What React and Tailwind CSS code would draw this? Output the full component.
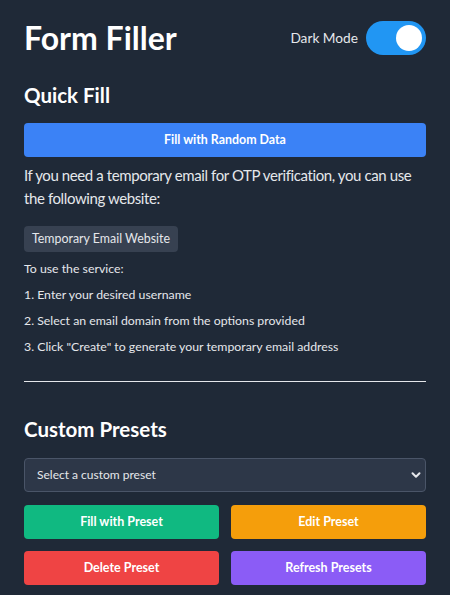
import React, { useState } from "react";

const App = () => {
  const [dark, setDark] = useState(true);

  return (
    <div
      className="min-h-screen bg-[#1f2937] text-[#e5e7eb] px-6 pt-5 pb-4"
      style={{ fontFamily: 'Lato, "Liberation Sans", sans-serif' }}
    >
      <div className="flex items-center justify-between h-[36px]">
        <h1 className="text-[32px] font-bold text-white leading-none">Form Filler</h1>
        <div className="flex items-center gap-2">
          <span className="text-[13.7px] text-[#e5e7eb]">Dark Mode</span>
          <button
            onClick={() => setDark(!dark)}
            className="w-[60px] h-[34px] rounded-full bg-[#2196f3] flex items-center px-1"
          >
            <span className="block w-[26px] h-[26px] rounded-full bg-white ml-auto" />
          </button>
        </div>
      </div>

      <h2 className="text-[20.5px] font-bold text-white mt-[25px] leading-7">Quick Fill</h2>
      <button className="w-full h-[34px] mt-[14px] rounded bg-[#3b82f6] text-white text-[12.4px] font-bold">
        Fill with Random Data
      </button>
      <p className="mt-[7px] text-[15px] tracking-[-0.4px] leading-[23px]">
        If you need a temporary email for OTP verification, you can use the following website:
      </p>
      <button className="mt-[16px] h-[26px] px-2 rounded bg-[#374151] text-[12.4px] text-[#e5e7eb]">
        Temporary Email Website
      </button>
      <div className="mt-[4px] text-[12.3px] leading-[26px]">
        <p>To use the service:</p>
        <p>1. Enter your desired username</p>
        <p>2. Select an email domain from the options provided</p>
        <p>3. Click "Create" to generate your temporary email address</p>
      </div>
      <hr className="mt-[21px] border-t border-[#e5e7eb]" />

      <h2 className="text-[20.5px] font-bold text-white mt-[33px] leading-7">Custom Presets</h2>
      <div className="mt-[15px] relative">
        <select className="w-full h-[34px] appearance-none rounded bg-[#2d3748] border border-[#4a5568] pl-3 text-xs text-[#e5e7eb]">
          <option>Select a custom preset</option>
        </select>
        <svg className="absolute right-[5px] top-[12px] w-[10px] h-[10px]" viewBox="0 0 10 10" fill="none">
          <path d="M1.5 3.2 5 6.7 8.5 3.2" stroke="#e5e7eb" strokeWidth="2" strokeLinecap="round" strokeLinejoin="round" />
        </svg>
      </div>
      <div className="grid grid-cols-2 gap-x-3 gap-y-3 mt-[13px]">
        <button className="h-[34px] rounded bg-[#10b981] text-white text-[12.5px] font-bold">Fill with Preset</button>
        <button className="h-[34px] rounded bg-[#f59e0b] text-white text-[12.5px] font-bold">Edit Preset</button>
        <button className="h-[34px] rounded bg-[#ef4444] text-white text-[12.5px] font-bold">Delete Preset</button>
        <button className="h-[34px] rounded bg-[#8b5cf6] text-white text-[12.5px] font-bold">Refresh Presets</button>
      </div>
    </div>
  );
};

export default App;
